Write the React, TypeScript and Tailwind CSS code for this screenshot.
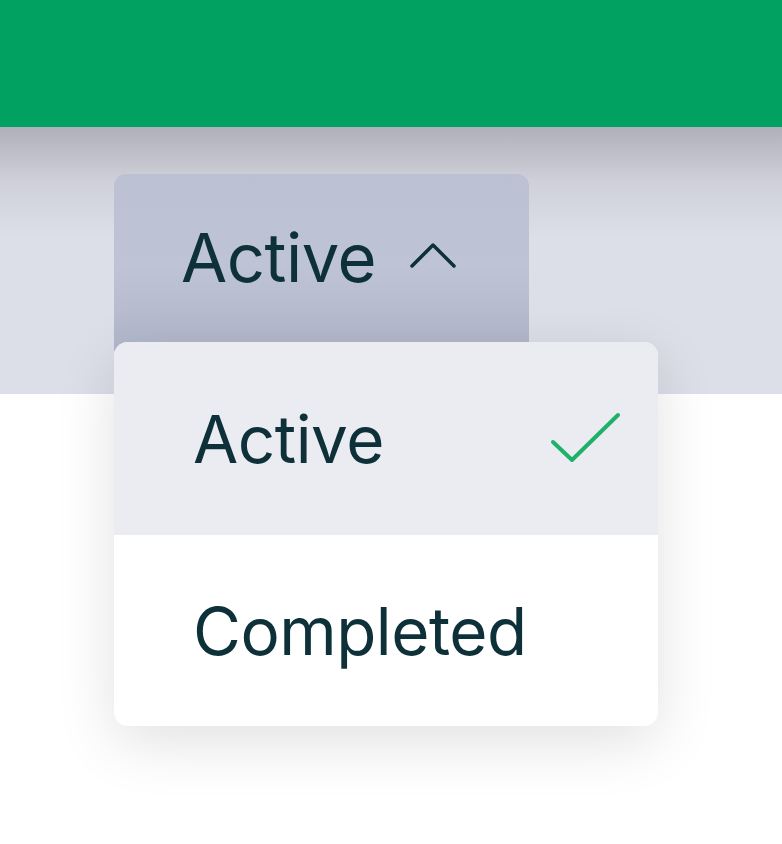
import React from "react";

export default function App() {
  return (
    <div
      className="relative h-[844px] w-[782px] overflow-hidden bg-white"
      style={{ fontFamily: "Inter, 'Noto Sans', sans-serif" }}
    >
      <div className="relative z-10 h-[127px] bg-[#00a161]" />
      <div className="relative h-[267px] bg-[#dcdee8]">
        <div className="pointer-events-none absolute inset-x-0 top-0 h-[110px] bg-gradient-to-b from-[#b0b0bb] via-[#cfd0da] to-[#dcdee8]" />
        <div className="relative pl-[114px] pt-[47px]">
          <div className="flex h-[180px] w-[415px] items-start rounded-t-[12px] bg-gradient-to-b from-[#bbc1d3] via-[#bec4d5] to-[#b0b6c9] pl-[67px] pt-[44px]">
            <span className="text-[67px] font-normal leading-[80px] tracking-[-0.5px] text-[#0d3039]">Active</span>
            <svg className="ml-[33px] mt-[22px]" width="48" height="30" viewBox="0 0 48 30" fill="none">
              <path d="M3 26 L24 5 L45 26" stroke="#0d3039" strokeWidth="3.5" strokeLinecap="round" strokeLinejoin="round" />
            </svg>
          </div>
        </div>
      </div>
      <div className="absolute left-[114px] top-[342px] z-20 w-[544px] overflow-hidden rounded-[14px] bg-white shadow-[0_16px_60px_rgba(0,0,0,0.12)]">
        <div className="flex h-[193px] items-center justify-between bg-[#ebecf1] pl-[79px] pr-[36px]">
          <span className="text-[65.6px] leading-[80px] tracking-[-0.5px] text-[#0d3039]">Active</span>
          <svg width="72" height="54" viewBox="0 0 72 54" fill="none">
            <path d="M3 30 L22 48 L68 3" stroke="#1db16a" strokeWidth="4" strokeLinecap="round" strokeLinejoin="round" />
          </svg>
        </div>
        <div className="flex h-[191px] items-center pl-[79px]">
          <span className="text-[65.6px] leading-[80px] tracking-[-0.5px] text-[#0d3039]">Completed</span>
        </div>
      </div>
    </div>
  );
}
